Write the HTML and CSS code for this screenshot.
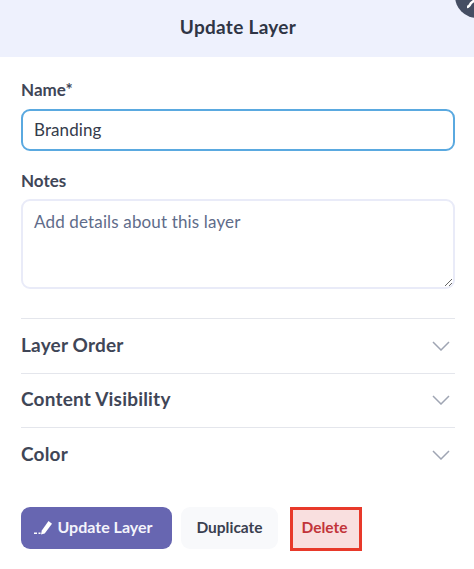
FILE: index.html
```html
<!DOCTYPE html>
<html>
  <head>
    <title>Update Layer</title>
    <link rel="stylesheet" href="styles.css">
  </head>

  <body>
    <div class="modal">
      <a class="close-btn" href="#" title="close">
        <svg width="10" height="10" viewBox="0 0 10 10"><path d="M1 8 C3 8 4 6 5 4 L9 1" stroke="#fff" stroke-width="2.5" fill="none"/></svg>
      </a>
      <header class="modal-head">
        <h1>Update Layer</h1>
      </header>

      <form class="layer-form">
        <label class="field-label" for="name">Name*</label>
        <input class="text-input" id="name" type="text" value="Branding" />

        <label class="field-label notes-label" for="notes">Notes</label>
        <textarea class="notes-input" id="notes" placeholder="Add details about this layer"></textarea>

        <div class="sections">
          <div class="section-row">
            <span>Layer Order</span>
            <svg class="chevron" width="18" height="10" viewBox="0 0 18 10"><path d="M1 1 L9 9 L17 1"/></svg>
          </div>
          <div class="section-row">
            <span>Content Visibility</span>
            <svg class="chevron" width="18" height="10" viewBox="0 0 18 10"><path d="M1 1 L9 9 L17 1"/></svg>
          </div>
          <div class="section-row">
            <span>Color</span>
            <svg class="chevron" width="18" height="10" viewBox="0 0 18 10"><path d="M1 1 L9 9 L17 1"/></svg>
          </div>
        </div>

        <div class="actions">
          <button class="btn btn-primary" type="button">
            <svg class="pen-icon" width="18" height="16" viewBox="0 0 18 16">
              <path d="M0 13.500h3v1.500H0zM4.500 13.500h2v1.500h-2z" fill="#fff"/>
              <path d="M7 15.500 L7.800 11.500 L14.500 2 L18 4.800 L10.700 14.500 Z" fill="#fff"/>
            </svg>
            Update Layer
          </button>
          <button class="btn btn-light" type="button">Duplicate</button>
          <button class="btn btn-danger" type="button">Delete</button>
        </div>
      </form>
    </div>
  </body>
</html>
```

FILE: styles.css
```css
* {
  box-sizing: border-box;
}

body {
  margin: 0;
  background: #fff;
  color: #3f4657;
  font-family: "Lato", "Liberation Sans", sans-serif;
  overflow: hidden;
}

.modal {
  position: relative;
  width: 474px;
  height: 569px;
  overflow: hidden;
}

.close-btn {
  position: absolute;
  top: -26px;
  left: 455px;
  width: 44px;
  height: 44px;
  border-radius: 50%;
  background: #454e63;
}

.close-btn svg {
  position: absolute;
  left: 11px;
  top: 25px;
}

.modal-head {
  height: 57px;
  padding: 0 0 4px 2px;
  background: #eef1fd;
  display: flex;
  align-items: center;
  justify-content: center;
}

.modal-head h1 {
  margin: 0;
  font-size: 19px;
  font-weight: 700;
  letter-spacing: 0.3px;
  color: #2f3545;
}

.layer-form {
  padding: 23px 19px 0 21px;
}

.field-label {
  display: block;
  font-size: 17px;
  font-weight: 700;
  line-height: 20px;
  margin-bottom: 9px;
}

.notes-label {
  margin-top: 20px;
  margin-bottom: 8px;
}

.text-input {
  display: block;
  width: 100%;
  height: 42px;
  padding: 0 11px 2px;
  border: 2px solid #5aa9e0;
  border-radius: 9px;
  outline: none;
  font: 400 17px "Lato", "Liberation Sans", sans-serif;
  letter-spacing: 0.1px;
  color: #353b4b;
}

.notes-input {
  display: block;
  width: 100%;
  height: 90px;
  padding: 10px 11px;
  border: 2px solid #e9ebf8;
  border-radius: 9px;
  outline: none;
  font: 400 17px "Lato", "Liberation Sans", sans-serif;
  letter-spacing: 0.15px;
  color: #353b4b;
}

.notes-input::placeholder {
  color: #5f6c8a;
  opacity: 1;
}

.sections {
  margin-top: 29px;
}

.section-row {
  height: 54.5px;
  padding: 0 5px 3px 0;
  display: flex;
  align-items: center;
  justify-content: space-between;
  border-top: 1px solid #e4e6ec;
  font-size: 19px;
  font-weight: 700;
  letter-spacing: 0.2px;
}

.chevron {
  margin-top: 3px;
}

.chevron path {
  fill: none;
  stroke: #9fa5b3;
  stroke-width: 1.5;
}

.actions {
  display: flex;
  align-items: flex-start;
  margin-top: 25px;
}

.btn {
  height: 42px;
  border: 0;
  border-radius: 9px;
  padding: 0 0 2px;
  font: 700 16px "Lato", "Liberation Sans", sans-serif;
  display: flex;
  align-items: center;
  justify-content: center;
}

.btn-primary {
  width: 151px;
  padding-right: 6px;
  background: #6766b1;
  color: #f4f4fb;
  gap: 5px;
}

.btn-light {
  width: 97px;
  margin-left: 9px;
  font-size: 15.5px;
  background: #f8f9fb;
  color: #3a4050;
}

.btn-danger {
  width: 72px;
  height: 44px;
  margin-left: 12px;
  padding: 0 3px 4px 0;
  border: 3px solid #e8392a;
  border-radius: 0;
  font-size: 15.5px;
  background: #f9dfdf;
  color: #c2343a;
}
```
